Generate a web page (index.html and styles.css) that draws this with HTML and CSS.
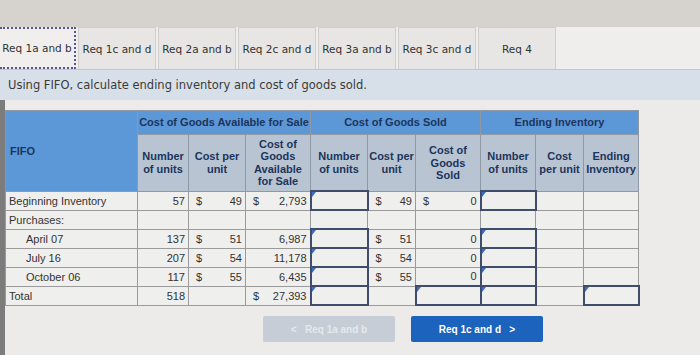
FILE: index.html
```html
<!DOCTYPE html>
<html lang="en">
<head>
    <meta charset="UTF-8">
    <meta name="viewport" content="width=device-width, initial-scale=1.0">
    <title>Req 1a and b</title>
    <link rel="stylesheet" href="styles.css">
</head>
<body>
    <div class="topbar"></div>

    <div class="tabs">
        <button class="tab active">Req 1a and b</button>
        <button class="tab">Req 1c and d</button>
        <button class="tab">Req 2a and b</button>
        <button class="tab">Req 2c and d</button>
        <button class="tab">Req 3a and b</button>
        <button class="tab">Req 3c and d</button>
        <button class="tab">Req 4</button>
    </div>

    <div class="prompt">Using FIFO, calculate ending inventory and cost of goods sold.</div>

    <div class="sheet">
        <table class="fifo">
            <colgroup>
                <col style="width:132px">
                <col style="width:51px">
                <col style="width:57px">
                <col style="width:65px">
                <col style="width:57px">
                <col style="width:48px">
                <col style="width:65px">
                <col style="width:55px">
                <col style="width:48px">
                <col style="width:55px">
            </colgroup>
            <thead>
                <tr class="group">
                    <th rowspan="2" class="label-head">FIFO</th>
                    <th colspan="3">Cost of Goods Available for Sale</th>
                    <th colspan="3">Cost of Goods Sold</th>
                    <th colspan="3">Ending Inventory</th>
                </tr>
                <tr class="sub">
                    <th>Number<br>of units</th>
                    <th>Cost per<br>unit</th>
                    <th>Cost of<br>Goods<br>Available<br>for Sale</th>
                    <th>Number<br>of units</th>
                    <th>Cost per<br>unit</th>
                    <th>Cost of<br>Goods<br>Sold</th>
                    <th>Number<br>of units</th>
                    <th>Cost<br>per unit</th>
                    <th>Ending<br>Inventory</th>
                </tr>
            </thead>
            <tbody>
                <tr>
                    <td>Beginning Inventory</td>
                    <td class="num">57</td>
                    <td class="num"><span>$</span>49</td>
                    <td class="num"><span>$</span>2,793</td>
                    <td class="entry"></td>
                    <td class="num"><span>$</span>49</td>
                    <td class="num"><span>$</span>0</td>
                    <td class="entry"></td>
                    <td></td>
                    <td></td>
                </tr>
                <tr>
                    <td>Purchases:</td>
                    <td></td><td></td><td></td><td></td><td></td><td></td><td></td><td></td><td></td>
                </tr>
                <tr>
                    <td class="indent">April 07</td>
                    <td class="num">137</td>
                    <td class="num"><span>$</span>51</td>
                    <td class="num">6,987</td>
                    <td class="entry"></td>
                    <td class="num"><span>$</span>51</td>
                    <td class="num">0</td>
                    <td class="entry"></td>
                    <td></td>
                    <td></td>
                </tr>
                <tr>
                    <td class="indent">July 16</td>
                    <td class="num">207</td>
                    <td class="num"><span>$</span>54</td>
                    <td class="num">11,178</td>
                    <td class="entry"></td>
                    <td class="num"><span>$</span>54</td>
                    <td class="num">0</td>
                    <td class="entry"></td>
                    <td></td>
                    <td></td>
                </tr>
                <tr>
                    <td class="indent">October 06</td>
                    <td class="num">117</td>
                    <td class="num"><span>$</span>55</td>
                    <td class="num">6,435</td>
                    <td class="entry"></td>
                    <td class="num"><span>$</span>55</td>
                    <td class="num">0</td>
                    <td class="entry"></td>
                    <td></td>
                    <td></td>
                </tr>
                <tr>
                    <td>Total</td>
                    <td class="num">518</td>
                    <td></td>
                    <td class="num"><span>$</span>27,393</td>
                    <td class="entry"></td>
                    <td></td>
                    <td class="entry"></td>
                    <td class="entry"></td>
                    <td></td>
                    <td class="entry"></td>
                </tr>
            </tbody>
        </table>

        <div class="nav">
            <button class="nav-btn prev">&lt;&nbsp;&nbsp;&nbsp;Req 1a and b</button>
            <button class="nav-btn next">Req 1c and d&nbsp;&nbsp;&nbsp;&gt;</button>
        </div>
    </div>
</body>
</html>
```

FILE: styles.css
```css
body {
    margin: 0;
    font-family: "DejaVu Sans", Verdana, sans-serif;
    background-color: #ecebe9;
    width: 700px;
    height: 355px;
    overflow: hidden;
}
.topbar {
    height: 27px;
    background-color: #d6d3cf;
}
.tabs {
    display: flex;
    gap: 2px;
    height: 42px;
    border-bottom: 1px solid #c4c6c8;
    background-color: #efeeec;
}
.tab {
    width: 78px;
    height: 42px;
    padding: 0;
    font-family: "DejaVu Sans", Verdana, sans-serif;
    font-size: 10.5px;
    color: #333;
    background-color: #e7e6e4;
    border: 1px solid #cfcecc;
    border-bottom: none;
}
.tab.active {
    width: 76px;
    background-color: #f0efed;
    border: 2px dotted #54578a;
    border-left: none;
}
.prompt {
    height: 30px;
    line-height: 30px;
    padding-left: 8px;
    font-size: 11.5px;
    color: #3a3a3a;
    background-color: #d7e0e8;
}
.sheet {
    border-left: 5px solid #7c7c7c;
    padding-top: 10px;
    height: 245px;
}
.fifo {
    border-collapse: collapse;
    table-layout: fixed;
    width: 633px;
    font-family: "Liberation Sans", Arial, sans-serif;
    font-size: 11px;
    color: #333;
}
.fifo th {
    font-weight: bold;
    font-size: 11px;
    color: #1c355c;
    border: 1px solid #8f99a6;
    padding: 0;
    line-height: 12.5px;
    white-space: nowrap;
}
.group th {
    height: 23px;
    background-color: #5c98d8;
}
.sub th {
    height: 55px;
    background-color: #b9c4d3;
}
.fifo th.label-head {
    text-align: left;
    vertical-align: middle;
    padding-left: 4px;
    background-color: #5c98d8;
}
.fifo td {
    height: 19px;
    padding: 0 3px;
    line-height: 14px;
    border: 1px solid #9a9a9a;
    background-color: #efefed;
    white-space: nowrap;
    box-sizing: border-box;
}
.fifo td.num {
    text-align: right;
}
.num span {
    float: left;
    padding-left: 4px;
}
.fifo td.indent {
    padding-left: 20px;
}
.fifo td.entry {
    position: relative;
    border: 2px solid #3f4c6b;
}
.entry::before {
    content: "";
    position: absolute;
    top: 0;
    left: 0;
    border-top: 5px solid #3a6fc4;
    border-right: 4px solid transparent;
}
.nav {
    display: flex;
    gap: 16px;
    margin: 10px 0 0 258px;
}
.nav-btn {
    width: 132px;
    height: 26px;
    border: none;
    border-radius: 2px;
    font-family: "Liberation Sans", Arial, sans-serif;
    font-size: 10px;
    font-weight: bold;
    color: #ffffff;
}
.prev {
    background-color: #c6cdd6;
    color: #e4e9ee;
}
.next {
    background-color: #1c63bd;
}
```
